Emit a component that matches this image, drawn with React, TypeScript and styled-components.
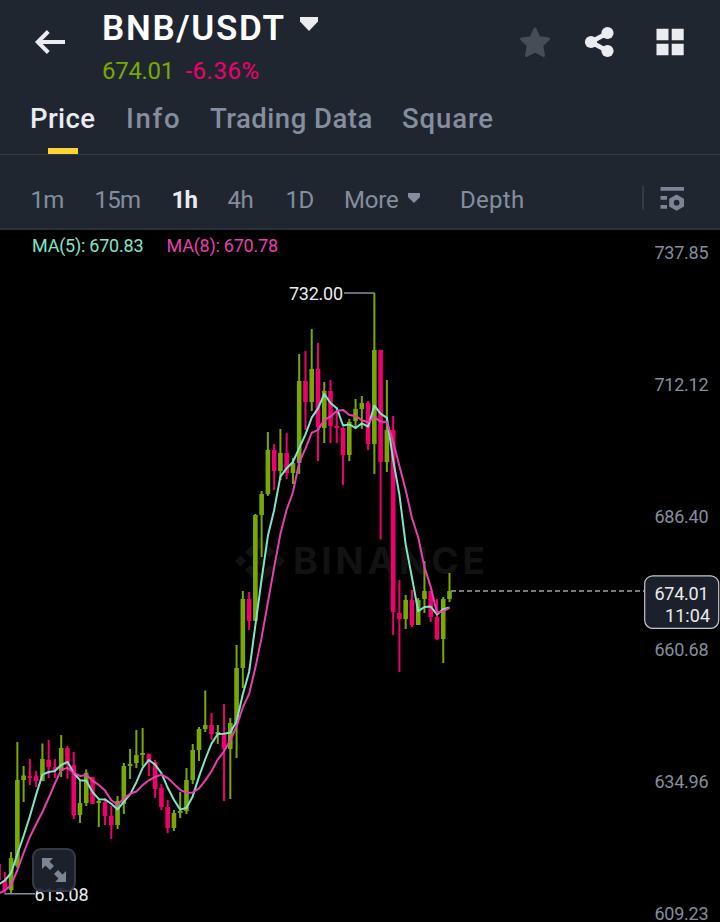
import React from "react";
import styled, { createGlobalStyle } from "styled-components";

const GlobalStyle = createGlobalStyle`
  * { box-sizing: border-box; }
  body { margin: 0; background: #000; }
`;

const colors = {
  panel: "#202630",
  line: "#333b47",
  text: "#eaecef",
  muted: "#848e9e",
  up: "#78a805",
  down: "#ef006f",
  ma5: "#80e5c8",
  ma8: "#e63fb0",
  yellow: "#fcd535",
};

const Screen = styled.main`
  width: 720px;
  height: 922px;
  overflow: hidden;
  background: #000;
  color: ${colors.text};
  font-family: Roboto, "Liberation Sans", sans-serif;
  white-space: nowrap;
`;

const Header = styled.header`
  display: flex;
  align-items: flex-start;
  height: 90px;
  padding-left: 34px;
  background: ${colors.panel};
  svg { display: block; flex: none; }
`;

const BackButton = styled.div`
  width: 68px;
  padding-top: 26px;
`;

const Pair = styled.div`
  flex: 1;
  padding-top: 8px;
`;

const Title = styled.div`
  display: flex;
  align-items: center;
  height: 40px;
  color: #fff;
  font-size: 35px;
  font-weight: 600;
  letter-spacing: 1.7px;
  svg { margin: -9px 0 0 13px; }
`;

const Quote = styled.div`
  display: flex;
  gap: 11.5px;
  height: 28px;
  margin-top: 9px;
  line-height: 28px;
  font-size: 24px;
`;

const Figure = styled.span<{ $down?: boolean; $spacing: number }>`
  color: ${(p) => (p.$down ? colors.down : colors.up)};
  letter-spacing: ${(p) => p.$spacing}px;
`;

const Actions = styled.div`
  display: flex;
  align-items: center;
  gap: 33px;
  padding: 26px 35px 0 0;
  svg:last-child { margin-left: 2px; }
`;

const Tabs = styled.nav`
  display: flex;
  height: 65px;
  padding-left: 30px;
  background: ${colors.panel};
  border-bottom: 1px solid ${colors.line};
`;

const Tab = styled.div<{ $active?: boolean; $width: number; $spacing?: number }>`
  display: flex;
  flex-direction: column;
  justify-content: space-between;
  width: ${(p) => p.$width}px;
  padding-top: 11px;
  line-height: 36px;
  font-size: 27.5px;
  font-weight: 500;
  letter-spacing: ${(p) => p.$spacing ?? 0}px;
  color: ${(p) => (p.$active ? colors.text : colors.muted)};
`;

const Underline = styled.div`
  width: 30px;
  height: 6px;
  margin-left: 18px;
  background: ${colors.yellow};
`;

const Intervals = styled.nav`
  display: flex;
  align-items: center;
  height: 75px;
  padding: 16px 0 0 30.5px;
  background: ${colors.panel};
  border-bottom: 2px solid #2b313b;
  svg { display: block; }
`;

const Interval = styled.div<{ $active?: boolean; $width: number; $spacing?: number }>`
  display: flex;
  align-items: center;
  gap: 9px;
  width: ${(p) => p.$width}px;
  line-height: 30px;
  font-size: 24px;
  font-weight: ${(p) => (p.$active ? 700 : 400)};
  letter-spacing: ${(p) => p.$spacing ?? 0}px;
  color: ${(p) => (p.$active ? colors.text : colors.muted)};
  svg { margin-top: -3px; }
`;

const Settings = styled.div`
  display: flex;
  align-items: center;
  height: 24px;
  margin: -4px 0 0 auto;
  padding: 0 35px 0 16px;
  border-left: 2px solid ${colors.line};
  svg { margin-top: 2px; }
`;

const Chart = styled.section`
  position: relative;
  height: 692px;
  > svg { display: block; font-family: Roboto, sans-serif; }
`;

const ExpandButton = styled.div`
  position: absolute;
  left: 32px;
  top: 618px;
  display: grid;
  place-items: center;
  width: 44px;
  height: 44px;
  border: 2px solid #343a45;
  border-radius: 9px;
  background: rgba(30, 34, 43, 0.93);
`;

type Candle = [dir: "u" | "d", high: number, low: number, top: number, bottom: number];

// Each candle: direction, wick top / bottom, body top / bottom, in screen units.
const candles: Candle[] = [
  ["d", 862, 884, 864, 880], ["d", 872, 893, 880, 890],
  ["u", 852, 893, 858, 890], ["u", 742, 868, 780, 866], ["u", 766, 802, 775.5, 780],
  ["d", 759, 785, 776, 777.5], ["d", 771, 787, 776, 781], ["u", 743.5, 781, 759, 781],
  ["d", 740, 778, 760, 767], ["d", 759, 778, 767, 770], ["u", 735, 777, 748, 771],
  ["d", 746, 779, 748, 765], ["d", 752, 819, 765, 815], ["u", 780, 823, 803, 815],
  ["u", 769.5, 806, 773, 803], ["d", 777, 804, 777, 804], ["u", 800, 827, 801, 803],
  ["d", 798, 825, 802, 816], ["d", 806, 839, 816, 825], ["u", 796, 829, 801, 825],
  ["u", 763, 814, 766, 804], ["u", 749, 779, 764, 766], ["u", 730, 768, 755, 763],
  ["u", 728, 766, 753, 755], ["d", 753.5, 776, 754, 762], ["d", 760, 798, 762, 789],
  ["d", 784, 810, 788, 807], ["d", 800, 833, 807, 828], ["u", 810, 831, 813, 828],
  ["u", 792, 818, 811, 813], ["u", 768, 814, 780, 811], ["u", 744, 784, 750, 780],
  ["u", 727, 761, 729, 750], ["u", 690.5, 732, 725, 729], ["d", 713, 740, 725, 734],
  ["u", 725, 744, 732, 734], ["d", 704, 801, 733, 749], ["u", 718, 799, 723, 749],
  ["u", 645, 758, 668, 723], ["u", 591, 688, 599, 668], ["d", 592, 630, 599, 621],
  ["u", 514, 621, 515, 621], ["u", 491, 557, 494, 515], ["u", 432, 496, 450, 494],
  ["d", 444, 490, 450, 471], ["u", 429, 480, 453, 471], ["d", 433, 479, 453, 473],
  ["u", 458, 484, 463, 473], ["u", 354, 474, 381, 463], ["d", 351, 430, 381, 402],
  ["u", 329, 411, 369, 402], ["d", 343, 461, 369, 427], ["u", 382, 443, 391, 428],
  ["d", 380, 443, 391, 426], ["d", 407, 443, 426, 428], ["d", 427, 485, 428, 455],
  ["u", 419, 461, 422, 455], ["u", 399, 429, 409, 421], ["u", 396, 429, 403, 409],
  ["d", 401, 450, 403, 444], ["u", 293, 474, 350, 444], ["d", 350, 539.5, 350, 462],
  ["u", 380, 472, 430, 462], ["d", 416, 635, 430, 612], ["d", 580, 672, 613, 619],
  ["u", 595, 629, 600, 619], ["d", 590, 627, 600, 625], ["u", 598, 625, 600, 625],
  ["u", 561, 613, 591, 599], ["d", 591, 622, 591, 617], ["d", 599, 640, 617, 639],
  ["u", 597, 663, 599, 639], ["u", 573, 602, 591, 599],
];

const xAt = (i: number) => 11.1 + (i - 2) * 6.263;
const closes = candles.map(([dir, , , top, bottom]) => (dir === "u" ? top : bottom));

// The first values rely on candles that are scrolled out of view.
function average(period: number, seed: number[]) {
  return closes
    .map((_, i) => {
      const y =
        i < seed.length
          ? seed[i]
          : closes.slice(i - period + 1, i + 1).reduce((a, b) => a + b, 0) / period;
      return `${xAt(i).toFixed(1)},${y.toFixed(1)}`;
    })
    .join(" ");
}

const ma5 = average(5, [884.5, 880.5, 873, 854, 836]);
const ma8 = average(8, [893.5, 890.5, 885, 870, 853, 837, 824, 812, 798]);

const axis = [
  ["737.85", 259], ["712.12", 391], ["686.40", 523],
  ["660.68", 656], ["634.96", 788], ["609.23", 920],
] as const;

function Candles() {
  return (
    <g>
      {candles.map(([dir, high, low, top, bottom], i) => (
        <g key={i} fill={dir === "u" ? colors.up : colors.down}>
          <rect x={xAt(i) - 1} y={high} width={2} height={low - high} />
          <rect x={xAt(i) - 2.3} y={top} width={4.6} height={Math.max(bottom - top, 2)} />
        </g>
      ))}
    </g>
  );
}

function Watermark() {
  return (
    <g fill="#121212">
      <g transform="translate(260 561)">
        <path d="M0-24 15-9 9.500-3.500 0-13-9.500-3.500-15-9Z" />
        <path d="M0 24 15 9 9.500 3.500 0 13-9.500 3.500-15 9Z" />
        <path d="M0-5.500 5.500 0 0 5.500-5.500 0ZM-19.500-5.500-14 0-19.500 5.500-25 0ZM19.500-5.500 25 0 19.500 5.500 14 0Z" />
      </g>
      <text x="293" y="574" fontFamily="Inter, sans-serif" fontSize="37.500" fontWeight="700" textLength="192">
        BINANCE
      </text>
    </g>
  );
}

export default function App() {
  return (
    <Screen>
      <GlobalStyle />
      <Header>
        <BackButton>
          <svg width="32" height="32" viewBox="34 26 32 32" fill="none" stroke={colors.text} strokeWidth="4">
            <path d="M37 42H65M48.300 31.500 37.800 42 48.300 52.500" />
          </svg>
        </BackButton>
        <Pair>
          <Title>
            BNB/USDT
            <svg width="20" height="16" viewBox="0 0 20 16">
              <path d="M1 1H19V5.500L10 15 1 5.500Z" fill={colors.text} />
            </svg>
          </Title>
          <Quote>
            <Figure $spacing={-0.3}>674.01</Figure>
            <Figure $down $spacing={0.5}>-6.36%</Figure>
          </Quote>
        </Pair>
        <Actions>
          <svg width="32" height="32" viewBox="519 26 32 32">
            <path
              d="M535 29 539 37.800 548.500 39 541.700 45.500 543.500 55.500 535 51 526.500 55.500 528.300 45.500 521.500 39 531 37.800Z"
              fill="#474d57" stroke="#474d57" strokeWidth="3" strokeLinejoin="round"
            />
          </svg>
          <svg width="32" height="32" viewBox="584 26 32 32" fill={colors.text}>
            <path d="M607.500 33 591 42 607.500 51" fill="none" stroke={colors.text} strokeWidth="4.800" />
            <circle cx="607.500" cy="33" r="6.100" />
            <circle cx="591" cy="42" r="6.100" />
            <circle cx="607.500" cy="51" r="6.100" />
          </svg>
          <svg width="34" height="32" viewBox="651 26 34 32" fill={colors.text}>
            <path d="M656.500 28.700h12v11.600h-12zM671.700 28.700h12v11.600h-12zM656.500 43.700h12v11.600h-12zM671.700 43.700h12v11.600h-12z" />
          </svg>
        </Actions>
      </Header>
      <Tabs>
        <Tab $active $width={96} $spacing={0.4}>
          Price
          <Underline />
        </Tab>
        <Tab $width={84} $spacing={1.7}>Info</Tab>
        <Tab $width={192} $spacing={0.5}>Trading Data</Tab>
        <Tab $width={110} $spacing={0.9}>Square</Tab>
      </Tabs>
      <Intervals>
        <Interval $width={64} $spacing={-0.7}>1m</Interval>
        <Interval $width={77} $spacing={-0.8}>15m</Interval>
        <Interval $active $width={56} $spacing={-0.8}>1h</Interval>
        <Interval $width={58} $spacing={-0.4}>4h</Interval>
        <Interval $width={58.5} $spacing={-0.6}>1D</Interval>
        <Interval $width={116} $spacing={-0.2}>
          More
          <svg width="14" height="11" viewBox="0 0 14 11">
            <path d="M1 0H13V4L7 10 1 4Z" fill={colors.muted} />
          </svg>
        </Interval>
        <Interval $width={80} $spacing={0.3}>Depth</Interval>
        <Settings>
          <svg width="25" height="26" viewBox="660 186 25 26" fill="#7b8594">
            <path d="M660.500 187h23.500v3.800h-23.500zM660.500 196h6.500v3.800h-6.500zM660.500 205h6.500v3.800h-6.500z" />
            <path
              fillRule="evenodd"
              d="M676.600 194.600 684 198.800V206.600L676.600 210.800 669.200 206.600V198.800ZM676.600 199.800a2.900 2.900 0 1 0 0 5.800 2.900 2.900 0 1 0 0-5.800Z"
            />
          </svg>
        </Settings>
      </Intervals>
      <Chart>
        <svg width="720" height="692" viewBox="0 230 720 692" fontSize="18">
          <Watermark />
          <text x="32" y="252" fill={colors.ma5} textLength="111.500">MA(5): 670.83</text>
          <text x="166.500" y="252" fill={colors.ma8} textLength="111.500">MA(8): 670.78</text>
          <path d="M451 591H645" stroke="#a0a0a0" strokeWidth="1.500" strokeDasharray="5 3" />
          <Candles />
          <g fill="none" strokeWidth="2" strokeLinejoin="round">
            <polyline points={ma5} stroke={colors.ma5} />
            <polyline points={ma8} stroke={colors.ma8} />
          </g>
          <path d="M344 293H374.500M4.500 893.700H35" stroke="#848e9c" strokeWidth="1.500" />
          <g fill={colors.text}>
            <text x="289" y="300" textLength="54">732.00</text>
            <text x="34.500" y="901" textLength="54">615.08</text>
          </g>
          <g fill={colors.muted}>
            {axis.map(([label, y]) => (
              <text key={label} x="654.500" y={y} textLength="54">{label}</text>
            ))}
          </g>
          <rect x="644.700" y="575.800" width="74" height="52.500" rx="8" fill="#1c202a" stroke="#c4c6ca" strokeWidth="1.200" />
          <g fill={colors.text}>
            <text x="654.500" y="600" textLength="54">674.01</text>
            <text x="665" y="622" textLength="45">11:04</text>
          </g>
        </svg>
        <ExpandButton>
          <svg width="26" height="26" viewBox="0 0 26 26" fill="#7b8594">
            <path d="M1 1H12L8.500 4.500 13 9 9 13 4.500 8.500 1 12ZM25 25H14L17.500 21.500 13 17 17 13 21.500 17.500 25 14Z" />
          </svg>
        </ExpandButton>
      </Chart>
    </Screen>
  );
}
